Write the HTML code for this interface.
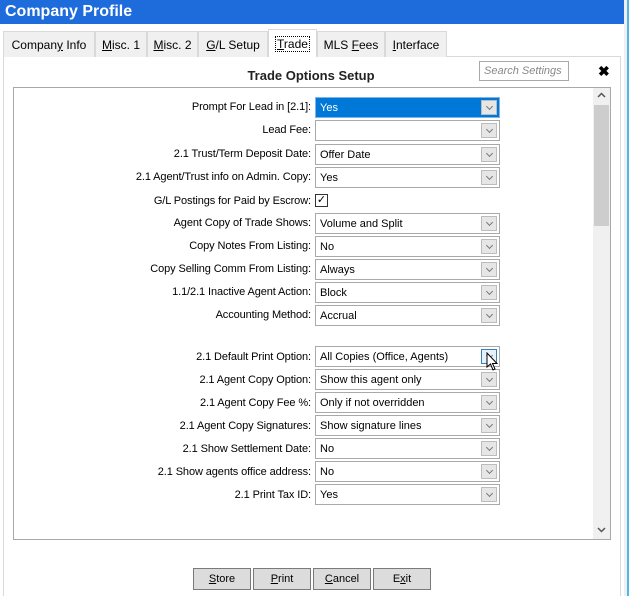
<!DOCTYPE html>
<html><head><style>
*{box-sizing:border-box;margin:0;padding:0}
html,body{width:629px;height:596px;overflow:hidden}
body{background:#fff;font-family:"Liberation Sans",Arial,sans-serif;font-size:11px;color:#000;position:relative}
.abs{position:absolute}
.title{left:0;top:0;width:624px;height:24px;background:#1e6cdc;color:#fff;font-weight:bold;font-size:16px;padding:3px 0 0 5px}
.tab{position:absolute;top:31px;height:26px;background:#f0f0f0;border:1px solid #d9d9d9;border-bottom:none;font-size:12px;text-align:center;padding-top:6px}
.panel{left:3px;top:56px;width:618px;height:540px;border:1px solid #d9d9d9;border-bottom:none;background:#fff}
.box{left:13px;top:87px;width:598px;height:453px;border:1px solid #a8a8a8}
.lbl{position:absolute;right:318px;width:300px;text-align:right;font-size:11px;letter-spacing:-0.1px}
.sel{position:absolute;left:315px;width:185px;height:21px;border:1px solid #a9a9a9;background:#fff;padding:4px 0 0 4px;font-size:11px}
.sel .dd{position:absolute;right:2px;top:2px;width:16px;height:15px;background:#e6e6e6;border:1px solid #bcbcbc}
.sel .dd:after{content:"";position:absolute;left:5px;top:3px;width:4px;height:4px;border-right:1px solid #777;border-bottom:1px solid #777;transform:rotate(45deg)}
.btn{position:absolute;top:568px;width:58px;height:22px;background:#dcdcdc;border:1px solid #7a7a7a;text-align:center;font-size:11px;padding-top:4px}
u{text-decoration:underline}
</style></head><body>
<div class="abs title">Company Profile</div>
<div class="abs" style="left:624px;top:0;width:3px;height:596px;background:#f0f0f0"></div>
<div class="abs" style="left:627px;top:0;width:2px;height:596px;background:#4fb8ea"></div>
<div class="abs panel"></div>
<div class="tab" style="left:3px;width:92px">Compan<u>y</u> Info</div>
<div class="tab" style="left:95px;width:52px"><u>M</u>isc. 1</div>
<div class="tab" style="left:147px;width:51px"><u>M</u>isc. 2</div>
<div class="tab" style="left:198px;width:70px"><u>G</u>/L Setup</div>
<div class="tab" style="left:268px;top:29px;height:28px;width:49px;background:#fff;border-color:#d9d9d9;padding-top:7px"><span style="border:1px dotted #000;padding:0 1px"><u>T</u>rade</span></div>
<div class="tab" style="left:317px;width:68px">MLS <u>F</u>ees</div>
<div class="tab" style="left:385px;width:62px"><u>I</u>nterface</div>
<div class="abs" style="left:0;top:68px;width:622px;text-align:center;font-weight:bold;font-size:13px;color:#222">Trade Options Setup</div>
<div class="abs" style="left:479px;top:61px;width:90px;height:20px;border:1px solid #a8a8a8;color:#888;font-style:italic;font-size:11px;padding:3px 0 0 4px">Search Settings</div>
<div class="abs" style="left:598px;top:63px;font-weight:bold;font-size:14px">✖</div>
<div class="abs box"></div>
<div class="abs" style="left:593px;top:88px;width:17px;height:451px;background:#f0f0f0"></div>
<div class="abs" style="left:594px;top:105px;width:15px;height:121px;background:#cdcdcd"></div>
<svg class="abs" style="left:597px;top:92px" width="9" height="6"><path d="M1 5 L4.5 1.5 L8 5" fill="none" stroke="#555" stroke-width="1.5"/></svg>
<svg class="abs" style="left:597px;top:527px" width="9" height="6"><path d="M1 1 L4.5 4.5 L8 1" fill="none" stroke="#555" stroke-width="1.5"/></svg>

<div class="lbl" style="top:101px">Prompt For Lead in [2.1]:</div>
<div class="sel" style="top:97px;background:#0078d7;color:#fff;border-color:#7eb4ea">Yes<div class="dd"></div></div>
<div class="lbl" style="top:124px">Lead Fee:</div>
<div class="sel" style="top:120px"><div class="dd"></div></div>
<div class="lbl" style="top:148px">2.1 Trust/Term Deposit Date:</div>
<div class="sel" style="top:144px">Offer Date<div class="dd"></div></div>
<div class="lbl" style="top:171px">2.1 Agent/Trust info on Admin. Copy:</div>
<div class="sel" style="top:167px">Yes<div class="dd"></div></div>
<div class="lbl" style="top:195px">G/L Postings for Paid by Escrow:</div>
<div class="abs" style="left:315px;top:194px;width:13px;height:13px;border:1px solid #333;font-size:11px;line-height:11px;text-align:center">✓</div>
<div class="lbl" style="top:217px">Agent Copy of Trade Shows:</div>
<div class="sel" style="top:213px">Volume and Split<div class="dd"></div></div>
<div class="lbl" style="top:240px">Copy Notes From Listing:</div>
<div class="sel" style="top:236px">No<div class="dd"></div></div>
<div class="lbl" style="top:263px">Copy Selling Comm From Listing:</div>
<div class="sel" style="top:259px">Always<div class="dd"></div></div>
<div class="lbl" style="top:286px">1.1/2.1 Inactive Agent Action:</div>
<div class="sel" style="top:282px">Block<div class="dd"></div></div>
<div class="lbl" style="top:309px">Accounting Method:</div>
<div class="sel" style="top:305px">Accrual<div class="dd"></div></div>

<div class="lbl" style="top:351px">2.1 Default Print Option:</div>
<div class="sel" style="top:346px">All Copies (Office, Agents)<div class="dd" style="border-color:#3c7fb1;background:#e5f1fb"></div></div>
<div class="lbl" style="top:374px">2.1 Agent Copy Option:</div>
<div class="sel" style="top:369px">Show this agent only<div class="dd"></div></div>
<div class="lbl" style="top:397px">2.1 Agent Copy Fee %:</div>
<div class="sel" style="top:392px">Only if not overridden<div class="dd"></div></div>
<div class="lbl" style="top:420px">2.1 Agent Copy Signatures:</div>
<div class="sel" style="top:415px">Show signature lines<div class="dd"></div></div>
<div class="lbl" style="top:443px">2.1 Show Settlement Date:</div>
<div class="sel" style="top:438px">No<div class="dd"></div></div>
<div class="lbl" style="top:466px">2.1 Show agents office address:</div>
<div class="sel" style="top:461px">No<div class="dd"></div></div>
<div class="lbl" style="top:489px">2.1 Print Tax ID:</div>
<div class="sel" style="top:484px">Yes<div class="dd"></div></div>
<svg class="abs" style="left:486px;top:352px" width="14" height="20" viewBox="0 0 14 20"><path d="M1 1 L1 15 L4.5 12 L7 18 L9 17 L6.5 11.5 L11 11.5 Z" fill="#fff" stroke="#000" stroke-width="1"/></svg>

<div class="btn" style="left:193px"><u>S</u>tore</div>
<div class="btn" style="left:253px"><u>P</u>rint</div>
<div class="btn" style="left:313px"><u>C</u>ancel</div>
<div class="btn" style="left:373px">E<u>x</u>it</div>
</body></html>
